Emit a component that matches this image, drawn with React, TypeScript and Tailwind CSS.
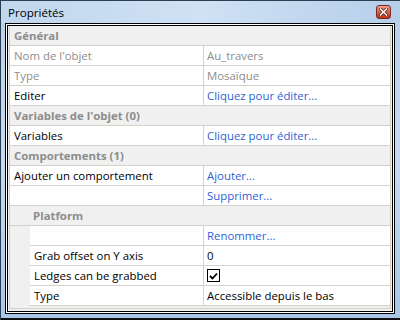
import React from "react";

type Row =
  | { kind: "header"; label: string; indent?: boolean }
  | {
      kind: "prop";
      name: string;
      value?: string;
      tone?: "gray" | "link" | "normal";
      nameGray?: boolean;
      indent?: boolean;
      checkbox?: boolean;
    };

const rows: Row[] = [
  { kind: "header", label: "Général" },
  { kind: "prop", name: "Nom de l'objet", value: "Au_travers", tone: "gray", nameGray: true },
  { kind: "prop", name: "Type", value: "Mosaïque", tone: "gray", nameGray: true },
  { kind: "prop", name: "Editer", value: "Cliquez pour éditer...", tone: "link" },
  { kind: "header", label: "Variables de l'objet (0)" },
  { kind: "prop", name: "Variables", value: "Cliquez pour éditer...", tone: "link" },
  { kind: "header", label: "Comportements (1)" },
  { kind: "prop", name: "Ajouter un comportement", value: "Ajouter...", tone: "link" },
  { kind: "prop", name: "", value: "Supprimer...", tone: "link" },
  { kind: "header", label: "Platform", indent: true },
  { kind: "prop", name: "", value: "Renommer...", tone: "link", indent: true },
  { kind: "prop", name: "Grab offset on Y axis", value: "0", indent: true },
  { kind: "prop", name: "Ledges can be grabbed", checkbox: true, indent: true },
  { kind: "prop", name: "Type", value: "Accessible depuis le bas", indent: true },
];

const CloseButton = () => (
  <div className="mt-[4px] mr-[9px] w-[15px] h-[14px] rounded-[3px] border border-[#7a2a1c] bg-gradient-to-b from-[#eba18f] via-[#d5624a] to-[#b8341c] flex items-center justify-center">
    <svg width="9" height="8" viewBox="0 0 9 8">
      <path d="M1.5 1 L7.5 7 M7.5 1 L1.5 7" stroke="#3a1008" strokeWidth="3" strokeLinecap="square" />
      <path d="M1.5 1 L7.5 7 M7.5 1 L1.5 7" stroke="#ffffff" strokeWidth="1.6" strokeLinecap="square" />
    </svg>
  </div>
);

const Check = () => (
  <div className="w-[13px] h-[13px] border border-black bg-white flex items-center justify-center">
    <svg width="9" height="8" viewBox="0 0 9 8">
      <path d="M1 4 L3.5 6.5 L8 1.5" fill="none" stroke="#000" strokeWidth="1.8" />
    </svg>
  </div>
);

const PropRow = ({ row }: { row: Row }) => {
  if (row.kind === "header") {
    return (
      <div className="h-[20px] flex items-center bg-[#f0f0f0] border-b border-[#d5d1c9]">
        <span className={`font-bold text-[#8d8d8d] ${row.indent ? "pl-[23px]" : "pl-[4px]"}`}>
          {row.label}
        </span>
      </div>
    );
  }
  const valueColor =
    row.tone === "gray" ? "text-[#8d8d8d]" : row.tone === "link" ? "text-[#2f5fd6]" : "text-black";
  return (
    <div className={`flex bg-[#f0f0f0] ${row.indent ? "pl-[20px]" : ""}`}>
      <div className="flex-1 flex h-[20px] bg-white border-b border-[#d5d1c9]">
        <div
          className={`${row.indent ? "w-[174px]" : "w-[194px]"} flex items-center border-r border-[#d5d1c9] pl-[4px] ${
            row.nameGray ? "text-[#8d8d8d]" : "text-black"
          }`}
        >
          {row.name}
        </div>
        <div className={`flex-1 flex items-center pl-[3px] ${valueColor}`}>
          {row.checkbox ? <Check /> : row.value}
        </div>
      </div>
    </div>
  );
};

export default function App() {
  return (
    <div
      className="w-[400px] h-[320px] flex flex-col border-l border-t border-[#2d3d52] bg-gradient-to-b from-[#b7d0eb] via-[#c6dbf1] to-[#a9c6e6] text-[11.4px] leading-none"
      style={{ fontFamily: '"Open Sans", "Noto Sans", sans-serif' }}
    >
      <div className="h-[22px] flex justify-between bg-gradient-to-r from-[#c1d7ee] via-[#cfe1f4] to-[#b6cfea]">
        <span className="pl-[7px] pt-[6px] text-black text-[11.6px]">Propriétés</span>
        <CloseButton />
      </div>
      <div className="flex-1 ml-[4px] mr-[5px] mb-[4px] border border-black bg-white p-[1px]">
        <div className="h-full border border-black bg-[#f0f0f0] flex flex-col">
          <div className="border-l border-r border-[#d5d1c9] bg-[#f0f0f0] mx-[1px] flex-1">
            {rows.map((r, i) => (
              <PropRow key={i} row={r} />
            ))}
          </div>
          <div className="h-[3px] mx-[1px] border-t border-[#d5d1c9]" />
        </div>
      </div>
      <div className="h-[2px] bg-[#101010]" />
    </div>
  );
}
